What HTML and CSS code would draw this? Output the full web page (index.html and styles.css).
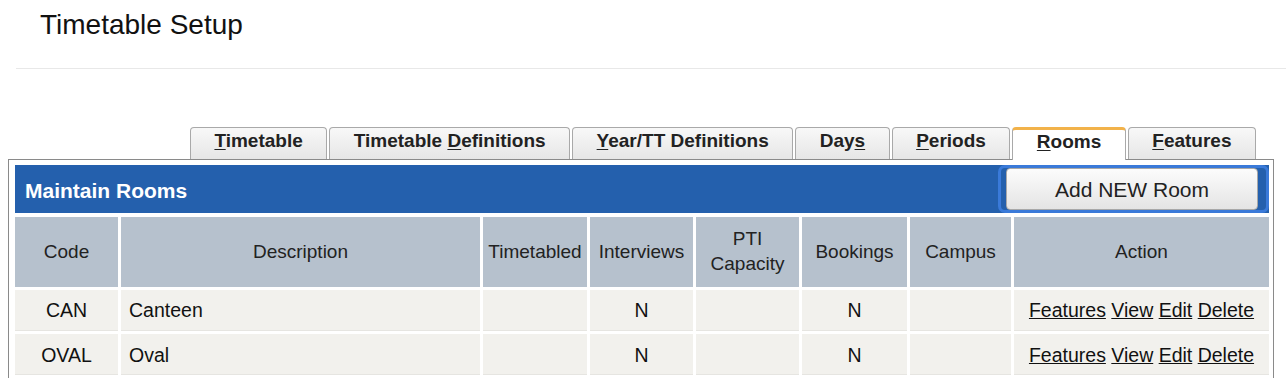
FILE: index.html
```html
<!DOCTYPE html>
<html>
<head>
<meta charset="utf-8">
<title>Timetable Setup</title>
<link rel="stylesheet" href="styles.css">
</head>
<body>
<div class="page-head">
  <h1 class="page-title">Timetable Setup</h1>
</div>

<div class="tabs">
  <div class="tab"><u>T</u>imetable</div>
  <div class="tab">Timetable <u>D</u>efinitions</div>
  <div class="tab"><u>Y</u>ear/TT Definitions</div>
  <div class="tab">Day<u>s</u></div>
  <div class="tab"><u>P</u>eriods</div>
  <div class="tab active"><u>R</u>ooms</div>
  <div class="tab"><u>F</u>eatures</div>
</div>

<div class="panel">
  <div class="bar">
    <span class="bar-title">Maintain Rooms</span>
    <span class="ring"><button class="btn">Add NEW Room</button></span>
  </div>
  <table class="grid">
    <colgroup>
      <col class="c-code">
      <col class="c-desc">
      <col class="c-tt">
      <col class="c-int">
      <col class="c-pti">
      <col class="c-book">
      <col class="c-camp">
      <col class="c-act">
    </colgroup>
    <thead>
      <tr>
        <th>Code</th>
        <th>Description</th>
        <th>Timetabled</th>
        <th>Interviews</th>
        <th>PTI<br>Capacity</th>
        <th>Bookings</th>
        <th>Campus</th>
        <th>Action</th>
      </tr>
    </thead>
    <tbody>
      <tr>
        <td class="ctr">CAN</td>
        <td>Canteen</td>
        <td></td>
        <td class="ctr">N</td>
        <td></td>
        <td class="ctr">N</td>
        <td></td>
        <td class="ctr"><a href="#">Features</a> <a href="#">View</a> <a href="#">Edit</a> <a href="#">Delete</a></td>
      </tr>
      <tr>
        <td class="ctr">OVAL</td>
        <td>Oval</td>
        <td></td>
        <td class="ctr">N</td>
        <td></td>
        <td class="ctr">N</td>
        <td></td>
        <td class="ctr"><a href="#">Features</a> <a href="#">View</a> <a href="#">Edit</a> <a href="#">Delete</a></td>
      </tr>
    </tbody>
  </table>
</div>
</body>
</html>
```

FILE: styles.css
```css
html, body {
  margin: 0;
  padding: 0;
  background: #ffffff;
  font-family: "Liberation Sans", Arial, sans-serif;
  color: #111;
}

.page-head {
  margin-left: 16px;
  height: 69px;
  border-bottom: 1px solid #e8e8e8;
  box-sizing: border-box;
}

.page-title {
  margin: 0;
  padding: 9px 0 0 24px;
  font-size: 28px;
  line-height: 32px;
  font-weight: normal;
  color: #111;
}

.tabs {
  display: flex;
  justify-content: flex-end;
  gap: 2px;
  margin-top: 58px;
  margin-left: 8px;
  width: 1248px;
  height: 32px;
}

.tab {
  box-sizing: border-box;
  height: 32px;
  padding: 0 23.5px;
  border: 1px solid #a9a9a9;
  border-bottom: none;
  border-radius: 4px 4px 0 0;
  background: linear-gradient(#f8f8f8, #e6e6e6);
  font-size: 19px;
  font-weight: bold;
  line-height: 26px;
  color: #222;
  white-space: nowrap;
}

.tab u {
  text-decoration-thickness: 1px;
  text-underline-offset: 2px;
}

.tab.active {
  background: #ffffff;
  border-top: 3px solid #f2b24a;
  line-height: 24px;
  position: relative;
  z-index: 1;
  height: 33px;
}

.panel {
  box-sizing: border-box;
  width: 1266px;
  margin-left: 8px;
  border: 1px solid #8a8a8a;
  padding: 5px 4px 0 6px;
  height: 230px;
}

.bar {
  display: flex;
  align-items: center;
  justify-content: space-between;
  height: 48px;
  background: #2460ad;
}

.bar-title {
  padding: 3px 0 0 10px;
  font-size: 21px;
  font-weight: bold;
  color: #ffffff;
}

.ring {
  box-sizing: border-box;
  display: flex;
  align-items: center;
  height: 48px;
  padding: 0 8px 0 5px;
  border: 3px solid #3a7ad9;
  border-radius: 7px;
}

.btn {
  box-sizing: border-box;
  width: 252px;
  height: 42px;
  border: 1px solid #a8a8a8;
  border-radius: 4px;
  background: linear-gradient(#fcfcfc, #e4e4e4);
  font-family: "Liberation Sans", Arial, sans-serif;
  font-size: 21px;
  color: #222;
  padding: 1px 0 0;
}

.grid {
  table-layout: fixed;
  border-collapse: separate;
  border-spacing: 3px;
  width: calc(100% + 6px);
  margin: 1px -3px 0 -3px;
}

.c-code { width: 103px; }
.c-desc { width: 359px; }
.c-tt { width: 104px; }
.c-int { width: 103px; }
.c-pti { width: 103px; }
.c-book { width: 105px; }
.c-camp { width: 101px; }

.grid th {
  height: 70px;
  box-sizing: border-box;
  padding: 9px 2px 11px;
  background: #b6c1cd;
  font-size: 19px;
  line-height: 25px;
  font-weight: normal;
  color: #222;
  text-align: center;
  vertical-align: middle;
}

.grid td {
  height: 41px;
  box-sizing: border-box;
  padding: 1px 8px 0;
  background: #f2f1ed;
  font-size: 19.5px;
  color: #111;
  white-space: nowrap;
  overflow: hidden;
  border-bottom: 1px solid #e6e5e1;
}

.grid tbody tr + tr td {
  padding-top: 3px;
}

.grid td.ctr {
  text-align: center;
}

.grid a {
  color: #111;
  text-decoration: underline;
}
```
